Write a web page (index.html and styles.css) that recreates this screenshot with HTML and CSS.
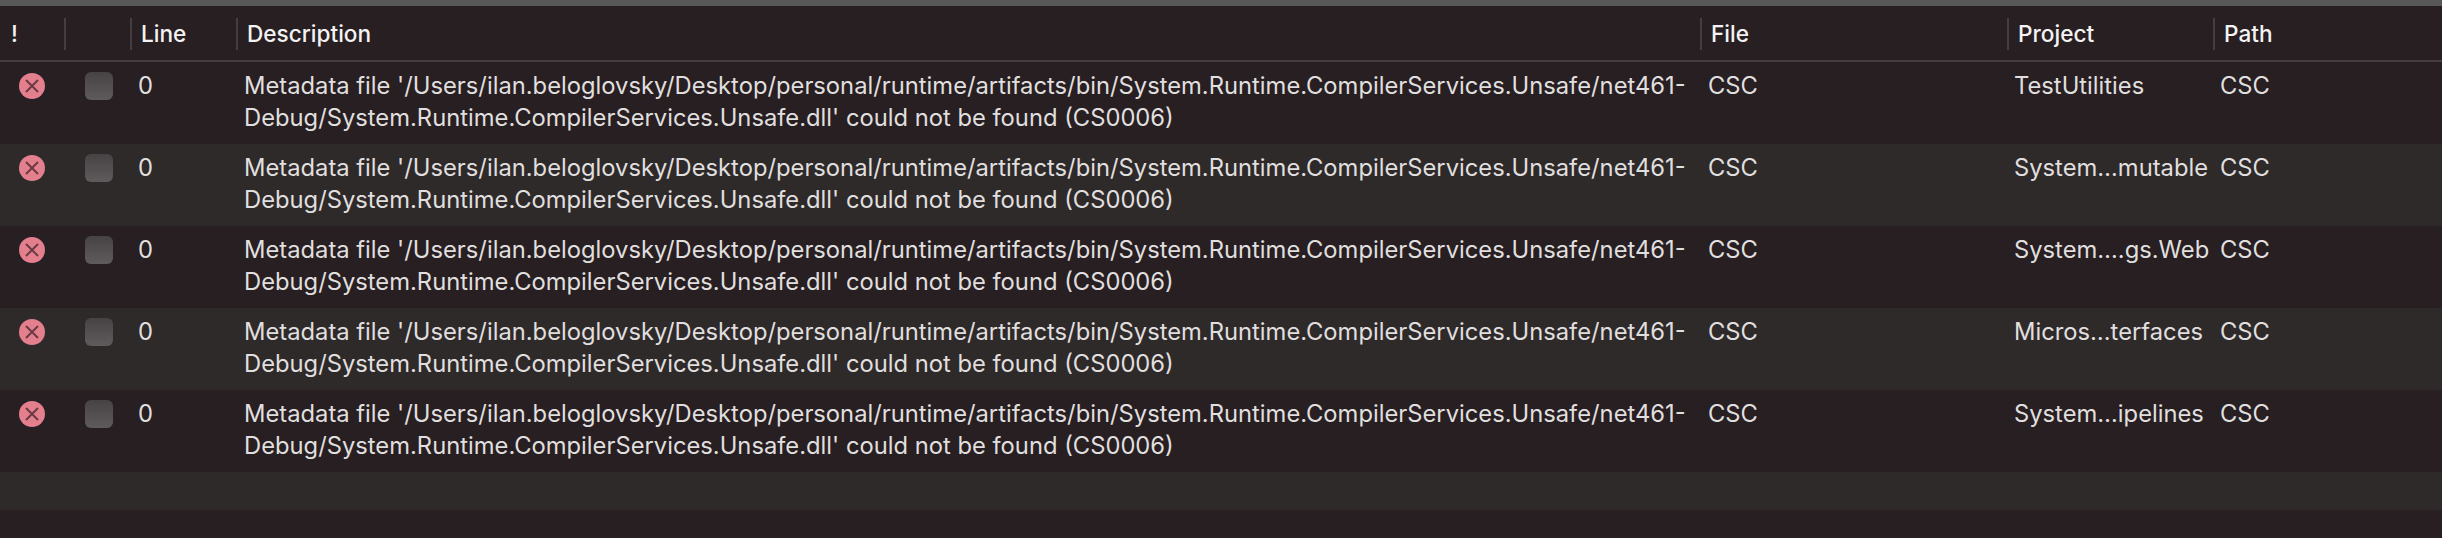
FILE: index.html
```html
<!DOCTYPE html>
<html lang="en">

<head>
    <meta charset="UTF-8">
    <title>Errors</title>
    <link rel="stylesheet" href="styles.css">
</head>

<body>
    <div class="topBar"></div>
    <div class="row header">
        <div class="head first">!</div>
        <div class="head"></div>
        <div class="head">Line</div>
        <div class="head">Description</div>
        <div class="head">File</div>
        <div class="head">Project</div>
        <div class="head">Path</div>
    </div>

    <div class="row item">
        <div class="cell"><svg class="errorIcon" viewBox="0 0 26 26"><circle cx="13" cy="13" r="13" fill="#e47f8e"/><path d="M7 7L19 19M19 7L7 19" stroke="#6b3a44" stroke-width="2" fill="none"/></svg></div>
        <div class="cell"><span class="check"></span></div>
        <div class="cell text">0</div>
        <div class="cell text">Metadata file '/Users/ilan.beloglovsky/Desktop/personal/runtime/artifacts/bin/System.Runtime.CompilerServices.Unsafe/net461-Debug/System.Runtime.CompilerServices.Unsafe.dll' could not be found (CS0006)</div>
        <div class="cell text">CSC</div>
        <div class="cell text project">TestUtilities</div>
        <div class="cell text path">CSC</div>
    </div>
    <div class="row item alt">
        <div class="cell"><svg class="errorIcon" viewBox="0 0 26 26"><circle cx="13" cy="13" r="13" fill="#e47f8e"/><path d="M7 7L19 19M19 7L7 19" stroke="#6b3a44" stroke-width="2" fill="none"/></svg></div>
        <div class="cell"><span class="check"></span></div>
        <div class="cell text">0</div>
        <div class="cell text">Metadata file '/Users/ilan.beloglovsky/Desktop/personal/runtime/artifacts/bin/System.Runtime.CompilerServices.Unsafe/net461-Debug/System.Runtime.CompilerServices.Unsafe.dll' could not be found (CS0006)</div>
        <div class="cell text">CSC</div>
        <div class="cell text project">System…mutable</div>
        <div class="cell text path">CSC</div>
    </div>
    <div class="row item">
        <div class="cell"><svg class="errorIcon" viewBox="0 0 26 26"><circle cx="13" cy="13" r="13" fill="#e47f8e"/><path d="M7 7L19 19M19 7L7 19" stroke="#6b3a44" stroke-width="2" fill="none"/></svg></div>
        <div class="cell"><span class="check"></span></div>
        <div class="cell text">0</div>
        <div class="cell text">Metadata file '/Users/ilan.beloglovsky/Desktop/personal/runtime/artifacts/bin/System.Runtime.CompilerServices.Unsafe/net461-Debug/System.Runtime.CompilerServices.Unsafe.dll' could not be found (CS0006)</div>
        <div class="cell text">CSC</div>
        <div class="cell text project">System….gs.Web</div>
        <div class="cell text path">CSC</div>
    </div>
    <div class="row item alt">
        <div class="cell"><svg class="errorIcon" viewBox="0 0 26 26"><circle cx="13" cy="13" r="13" fill="#e47f8e"/><path d="M7 7L19 19M19 7L7 19" stroke="#6b3a44" stroke-width="2" fill="none"/></svg></div>
        <div class="cell"><span class="check"></span></div>
        <div class="cell text">0</div>
        <div class="cell text">Metadata file '/Users/ilan.beloglovsky/Desktop/personal/runtime/artifacts/bin/System.Runtime.CompilerServices.Unsafe/net461-Debug/System.Runtime.CompilerServices.Unsafe.dll' could not be found (CS0006)</div>
        <div class="cell text">CSC</div>
        <div class="cell text project">Micros…terfaces</div>
        <div class="cell text path">CSC</div>
    </div>
    <div class="row item">
        <div class="cell"><svg class="errorIcon" viewBox="0 0 26 26"><circle cx="13" cy="13" r="13" fill="#e47f8e"/><path d="M7 7L19 19M19 7L7 19" stroke="#6b3a44" stroke-width="2" fill="none"/></svg></div>
        <div class="cell"><span class="check"></span></div>
        <div class="cell text">0</div>
        <div class="cell text">Metadata file '/Users/ilan.beloglovsky/Desktop/personal/runtime/artifacts/bin/System.Runtime.CompilerServices.Unsafe/net461-Debug/System.Runtime.CompilerServices.Unsafe.dll' could not be found (CS0006)</div>
        <div class="cell text">CSC</div>
        <div class="cell text project">System…ipelines</div>
        <div class="cell text path">CSC</div>
    </div>

    <div class="emptyRow"></div>
</body>

</html>
```

FILE: styles.css
```css
html,
body {
    height: 100%;
}

body {
    margin: 0;
    overflow: hidden;
    background: #271f22;
    color: #e0dfdf;
    font-family: Inter, "Liberation Sans", sans-serif;
    font-size: 23.75px;
    line-height: 32px;
}

.topBar {
    height: 6px;
    background: #575757;
}

.row {
    display: grid;
    grid-template-columns: 64px 66px 106px 1464px 307px 206px 229px;
}

.header {
    height: 56px;
    padding-top: 12px;
    box-sizing: border-box;
    border-bottom: 2px solid #453d40;
}

.head {
    height: 32px;
    padding-left: 9px;
    border-left: 2px solid #453d40;
    color: #f4f3f3;
    font-size: 22.6px;
    font-weight: 500;
    line-height: 32px;
}

.head.first {
    border-left: none;
    padding-left: 11px;
}

.item {
    height: 82px;
}

.alt,
.emptyRow {
    background: #2e2a2a;
}

.cell {
    padding: 7px 0 0 7px;
}

.errorIcon {
    display: block;
    width: 26px;
    height: 26px;
    margin: 4px 0 0 12px;
}

.check {
    display: block;
    width: 28px;
    height: 28px;
    margin: 3px 0 0 14px;
    border-radius: 6px;
    background: linear-gradient(#474344, #5f5b5c);
}

.text {
    padding: 8px 0 0 8px;
}

.project {
    padding-left: 7px;
}

.path {
    padding-left: 7px;
}

.emptyRow {
    height: 38px;
}
```
